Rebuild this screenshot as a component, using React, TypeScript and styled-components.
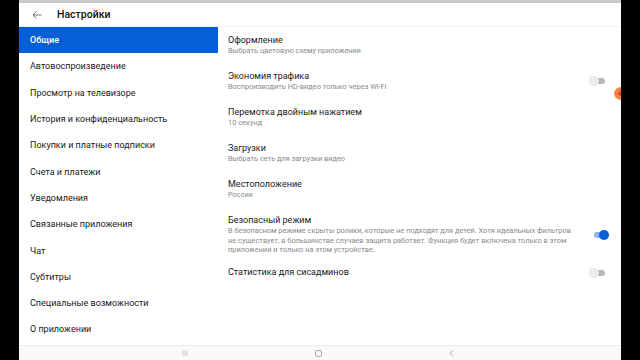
import React from "react";
import styled, { createGlobalStyle } from "styled-components";

const Global = createGlobalStyle`
  html, body { margin: 0; padding: 0; background: #000; }
  body { font-family: Roboto, "Noto Sans", "Liberation Sans", sans-serif; }
  * { box-sizing: border-box; }
`;

const Page = styled.div`
  width: 640px;
  height: 360px;
  background: #000;
  display: flex;
  justify-content: flex-start;
`;

const Screen = styled.div`
  margin-left: 19px;
  width: 602px;
  height: 360px;
  background: #fff;
  display: flex;
  flex-direction: column;
  position: relative;
  overflow: hidden;
`;

const StatusStrip = styled.div`
  height: 3px;
  background: #c9c9c9;
  flex: none;
`;

const Header = styled.header`
  height: 24px;
  flex: none;
  display: flex;
  align-items: center;
  padding-left: 12px;
  border-bottom: 1px solid #f2f2f2;
`;

const BackButton = styled.button`
  width: 12px;
  height: 12px;
  padding: 0;
  border: none;
  background: none;
  display: flex;
  align-items: center;
  justify-content: center;
  margin-right: 14px;
  color: #666;
`;

const Title = styled.h1`
  margin: 0;
  font-size: 10.5px;
  font-weight: 500;
  color: #111;
`;

const Body = styled.div`
  flex: 1;
  display: flex;
  min-height: 0;
`;

const Sidebar = styled.nav`
  width: 199px;
  flex: none;
  display: flex;
  flex-direction: column;
`;

const NavItem = styled.div<{ $active?: boolean }>`
  height: 26.3px;
  flex: none;
  display: flex;
  align-items: center;
  padding-left: 11px;
  font-size: 9px;
  font-weight: ${(p) => (p.$active ? 500 : 400)};
  color: ${(p) => (p.$active ? "#fff" : "#1a1a1a")};
  background: ${(p) => (p.$active ? "#065fd4" : "transparent")};
`;

const Content = styled.main`
  flex: 1;
  display: flex;
  flex-direction: column;
  padding: 2px 13px 0 10px;
`;

const Row = styled.div<{ $pb?: number }>`
  display: flex;
  align-items: center;
  padding-top: 6px;
  padding-bottom: ${(p) => p.$pb ?? 9.3}px;
`;

const TextBlock = styled.div`
  flex: 1;
  display: flex;
  flex-direction: column;
`;

const RowTitle = styled.div`
  font-size: 9px;
  line-height: 11px;
  color: #1a1a1a;
`;

const RowSub = styled.div`
  font-size: 7.4px;
  line-height: 9.7px;
  color: #8a8a8a;
`;

const Toggle = styled.div<{ $on?: boolean }>`
  position: relative;
  width: 16px;
  height: 10px;
  flex: none;
  margin-left: 20px;
  margin-right: ${(p) => (p.$on ? 0 : 3)}px;
  &::before {
    content: "";
    position: absolute;
    left: 2px;
    right: 0;
    top: 2px;
    height: 6px;
    border-radius: 3px;
    background: ${(p) => (p.$on ? "#8fb4ea" : "#b8b8b8")};
  }
  &::after {
    content: "";
    position: absolute;
    top: 0;
    ${(p) => (p.$on ? "right: -1px;" : "left: 0;")}
    width: 10px;
    height: 10px;
    border-radius: 50%;
    background: ${(p) => (p.$on ? "#065fd4" : "#ececec")};
    box-shadow: 0 0 1px rgba(0, 0, 0, 0.15);
  }
`;

const NavBar = styled.div`
  height: 15px;
  flex: none;
  background: #fafafa;
  border-top: 1px solid #ececec;
  display: grid;
  grid-template-columns: repeat(3, 133.5px);
  align-items: center;
  justify-items: center;
  padding-left: 99px;
`;

const NavIcon = styled.svg`
  display: block;
  color: #8c8c8c;
`;

const TouchDot = styled.div`
  position: absolute;
  left: 595px;
  top: 87px;
  width: 13px;
  height: 13px;
  border-radius: 50%;
  background: radial-gradient(circle, #d9461a 0 1.5px, #f07a3e 2.5px, #f4874c 60%, rgba(246,150,100,0.6) 100%);
`;

const menu = [
  "Общие",
  "Автовоспроизведение",
  "Просмотр на телевизоре",
  "История и конфиденциальность",
  "Покупки и платные подписки",
  "Счета и платежи",
  "Уведомления",
  "Связанные приложения",
  "Чат",
  "Субтитры",
  "Специальные возможности",
  "О приложении",
];

export default function App() {
  return (
    <>
      <Global />
      <Page>
        <Screen>
          <StatusStrip />
          <Header>
            <BackButton aria-label="Назад">
              <svg width="10" height="8" viewBox="0 0 10 8" fill="none" stroke="currentColor" strokeWidth="0.9">
                <path d="M9.5 4H1M4.5 0.6L1 4l3.5 3.4" />
              </svg>
            </BackButton>
            <Title>Настройки</Title>
          </Header>
          <Body>
            <Sidebar>
              {menu.map((m, i) => (
                <NavItem key={m} $active={i === 0}>
                  {m}
                </NavItem>
              ))}
            </Sidebar>
            <Content>
              <Row>
                <TextBlock>
                  <RowTitle>Оформление</RowTitle>
                  <RowSub>Выбрать цветовую схему приложения</RowSub>
                </TextBlock>
              </Row>
              <Row>
                <TextBlock>
                  <RowTitle>Экономия трафика</RowTitle>
                  <RowSub>Воспроизводить HD-видео только через Wi-Fi</RowSub>
                </TextBlock>
                <Toggle />
              </Row>
              <Row>
                <TextBlock>
                  <RowTitle>Перемотка двойным нажатием</RowTitle>
                  <RowSub>10 секунд</RowSub>
                </TextBlock>
              </Row>
              <Row>
                <TextBlock>
                  <RowTitle>Загрузки</RowTitle>
                  <RowSub>Выбрать сеть для загрузки видео</RowSub>
                </TextBlock>
              </Row>
              <Row>
                <TextBlock>
                  <RowTitle>Местоположение</RowTitle>
                  <RowSub>Россия</RowSub>
                </TextBlock>
              </Row>
              <Row $pb={6}>
                <TextBlock>
                  <RowTitle>Безопасный режим</RowTitle>
                  <RowSub>
                    В безопасном режиме скрыты ролики, которые не подходят для детей. Хотя идеальных фильтров
                    <br />
                    не существует, в большинстве случаев защита работает. Функция будет включена только в этом
                    <br />
                    приложении и только на этом устройстве.
                  </RowSub>
                </TextBlock>
                <Toggle $on />
              </Row>
              <Row>
                <TextBlock>
                  <RowTitle>Статистика для сисадминов</RowTitle>
                </TextBlock>
                <Toggle />
              </Row>
            </Content>
          </Body>
          <NavBar>
            <NavIcon width="6" height="6" viewBox="0 0 6 6" stroke="currentColor" strokeWidth="0.5">
              <path d="M1 0.5v5M3 0.5v5M5 0.5v5" />
            </NavIcon>
            <NavIcon width="7" height="7" viewBox="0 0 7 7" fill="none" stroke="currentColor" strokeWidth="0.8">
              <rect x="0.6" y="0.6" width="5.8" height="5.8" rx="1.2" />
            </NavIcon>
            <NavIcon width="5" height="7" viewBox="0 0 5 7" fill="none" stroke="currentColor" strokeWidth="0.8">
              <path d="M4 0.5L1 3.5l3 3" />
            </NavIcon>
          </NavBar>
          <TouchDot />
        </Screen>
      </Page>
    </>
  );
}
